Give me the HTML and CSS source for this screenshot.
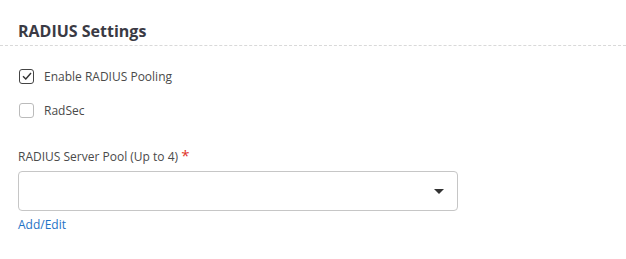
FILE: index.html
```html
<!DOCTYPE html>
<html lang="en">
<head>
  <meta charset="UTF-8" />
  <title>RADIUS Settings</title>
  <link rel="stylesheet" href="styles.css">
</head>
<body>
  <div class="section">
    <h2 class="section-title">RADIUS Settings</h2>
    <div class="section-body">
      <label class="check">
        <span class="box checked">
          <svg width="10" height="8" viewBox="0 0 10 8"><path d="M1 4.2 L3.8 7 L9 1" fill="none" stroke="#333" stroke-width="1.4"/></svg>
        </span>
        Enable RADIUS Pooling
      </label>
      <label class="check">
        <span class="box"></span>
        RadSec
      </label>

      <div class="field">
        <div class="field-label">RADIUS Server Pool (Up to 4) <span class="req">*</span></div>
        <div class="select">
          <span class="caret"></span>
        </div>
        <a class="link" href="#">Add/Edit</a>
      </div>
    </div>
  </div>
</body>
</html>
```

FILE: styles.css
```css
* {
  box-sizing: border-box;
}

body {
  margin: 0;
  font-family: 'Open Sans', sans-serif;
  background: #fff;
  color: #4a4a4a;
}

.section-title {
  margin: 0;
  padding: 23px 18px 5px;
  font-size: 16px;
  font-weight: 700;
  color: #3a3a44;
  border-bottom: 1px dashed #d9d9d9;
  line-height: 17px;
}

.section-body {
  padding: 13px 18px 0;
}

.check {
  display: flex;
  align-items: center;
  gap: 10px;
  font-size: 12px;
  color: #4a4a4a;
  height: 34px;
}

.box {
  width: 15px;
  height: 15px;
  border: 1px solid #bbb;
  border-radius: 3px;
  display: flex;
  align-items: center;
  justify-content: center;
  margin-left: 1px;
}

.box.checked {
  border-color: #444;
}

.field {
  margin-top: 19px;
}

.field-label {
  font-size: 12px;
  color: #4a4a4a;
  line-height: 18px;
}

.req {
  color: #e0332a;
  font-size: 15px;
}

.select {
  position: relative;
  margin-top: 5px;
  width: 440px;
  height: 40px;
  border: 1px solid #c6c6c6;
  border-radius: 4px;
}

.caret {
  position: absolute;
  right: 13px;
  top: 17px;
  width: 0;
  height: 0;
  border-left: 5px solid transparent;
  border-right: 5px solid transparent;
  border-top: 5px solid #333;
}

.link {
  display: inline-block;
  margin-top: 5px;
  font-size: 12px;
  color: #1f73c6;
  text-decoration: none;
}
```
